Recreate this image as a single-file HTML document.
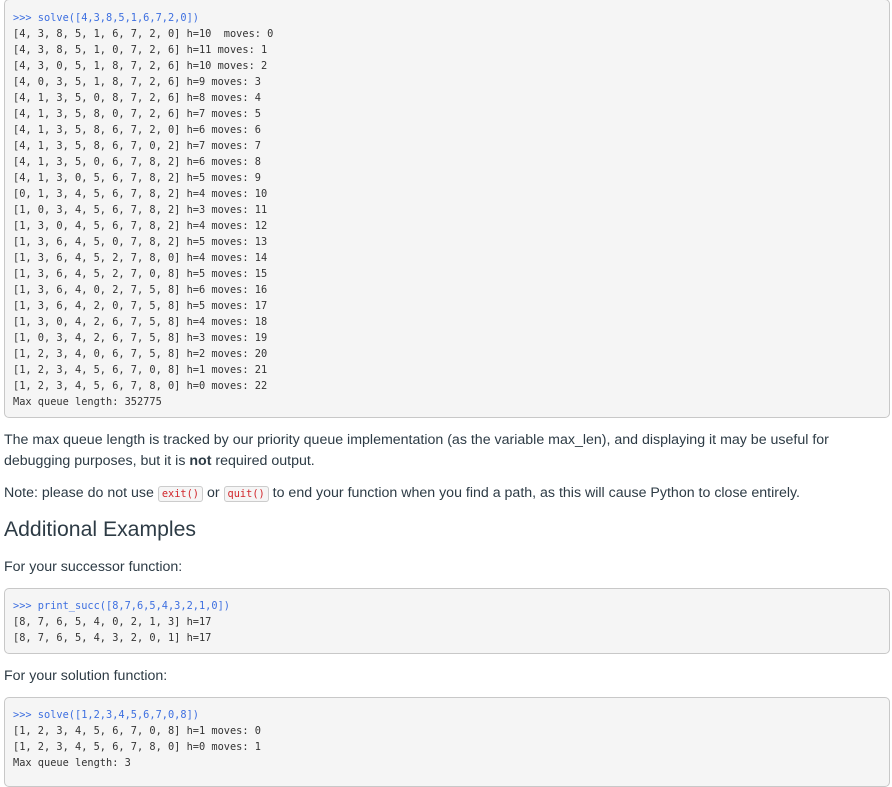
<!DOCTYPE html>
<html><head><meta charset="utf-8"><style>
body{margin:0;background:#fff;width:892px;height:767px;overflow:hidden;position:relative;font-family:"Liberation Sans",sans-serif;color:#2d3b45}
.pre{position:absolute;left:4px;width:886px;background:#f5f5f5;border:1px solid #c8c8c8;border-radius:5px;box-sizing:border-box;font-family:"DejaVu Sans Mono","Liberation Mono",monospace;font-size:10.3px;line-height:16px;color:#333;padding:0 0 0 8px;white-space:pre;overflow:hidden}
.pre span{color:#3d6fe0}
.p{position:absolute;left:4px;font-size:14.2px;line-height:21px;width:880px}
code{font-family:"DejaVu Sans Mono",monospace;font-size:10.3px;color:#d1262b;background:#f5f5f5;border:1px solid #ccc;border-radius:3px;padding:1px 3px}
h2{position:absolute;left:4px;top:515px;margin:0;font-weight:normal;font-size:21.2px;line-height:30px}
</style></head><body>
<div class="pre" style="top:-1px;height:419px;padding-top:10px"><span>&gt;&gt;&gt; solve([4,3,8,5,1,6,7,2,0])</span>
[4, 3, 8, 5, 1, 6, 7, 2, 0] h=10  moves: 0
[4, 3, 8, 5, 1, 0, 7, 2, 6] h=11 moves: 1
[4, 3, 0, 5, 1, 8, 7, 2, 6] h=10 moves: 2
[4, 0, 3, 5, 1, 8, 7, 2, 6] h=9 moves: 3
[4, 1, 3, 5, 0, 8, 7, 2, 6] h=8 moves: 4
[4, 1, 3, 5, 8, 0, 7, 2, 6] h=7 moves: 5
[4, 1, 3, 5, 8, 6, 7, 2, 0] h=6 moves: 6
[4, 1, 3, 5, 8, 6, 7, 0, 2] h=7 moves: 7
[4, 1, 3, 5, 0, 6, 7, 8, 2] h=6 moves: 8
[4, 1, 3, 0, 5, 6, 7, 8, 2] h=5 moves: 9
[0, 1, 3, 4, 5, 6, 7, 8, 2] h=4 moves: 10
[1, 0, 3, 4, 5, 6, 7, 8, 2] h=3 moves: 11
[1, 3, 0, 4, 5, 6, 7, 8, 2] h=4 moves: 12
[1, 3, 6, 4, 5, 0, 7, 8, 2] h=5 moves: 13
[1, 3, 6, 4, 5, 2, 7, 8, 0] h=4 moves: 14
[1, 3, 6, 4, 5, 2, 7, 0, 8] h=5 moves: 15
[1, 3, 6, 4, 0, 2, 7, 5, 8] h=6 moves: 16
[1, 3, 6, 4, 2, 0, 7, 5, 8] h=5 moves: 17
[1, 3, 0, 4, 2, 6, 7, 5, 8] h=4 moves: 18
[1, 0, 3, 4, 2, 6, 7, 5, 8] h=3 moves: 19
[1, 2, 3, 4, 0, 6, 7, 5, 8] h=2 moves: 20
[1, 2, 3, 4, 5, 6, 7, 0, 8] h=1 moves: 21
[1, 2, 3, 4, 5, 6, 7, 8, 0] h=0 moves: 22
Max queue length: 352775</div>
<div class="p" style="top:430px">The max queue length is tracked by our priority queue implementation (as the variable max_len), and displaying it may be useful for debugging purposes, but it is <b>not</b> required output.</div>
<div class="p" style="top:483px">Note: please do not use <code>exit()</code> or <code>quit()</code> to end your function when you find a path, as this will cause Python to close entirely.</div>
<h2>Additional Examples</h2>
<div class="p" style="top:557px">For your successor function:</div>
<div class="pre" style="top:588px;height:66px;padding-top:9px"><span>&gt;&gt;&gt; print_succ([8,7,6,5,4,3,2,1,0])</span>
[8, 7, 6, 5, 4, 0, 2, 1, 3] h=17
[8, 7, 6, 5, 4, 3, 2, 0, 1] h=17</div>
<div class="p" style="top:666px">For your solution function:</div>
<div class="pre" style="top:697px;height:90px;padding-top:9px"><span>&gt;&gt;&gt; solve([1,2,3,4,5,6,7,0,8])</span>
[1, 2, 3, 4, 5, 6, 7, 0, 8] h=1 moves: 0
[1, 2, 3, 4, 5, 6, 7, 8, 0] h=0 moves: 1
Max queue length: 3</div>
</body></html>
